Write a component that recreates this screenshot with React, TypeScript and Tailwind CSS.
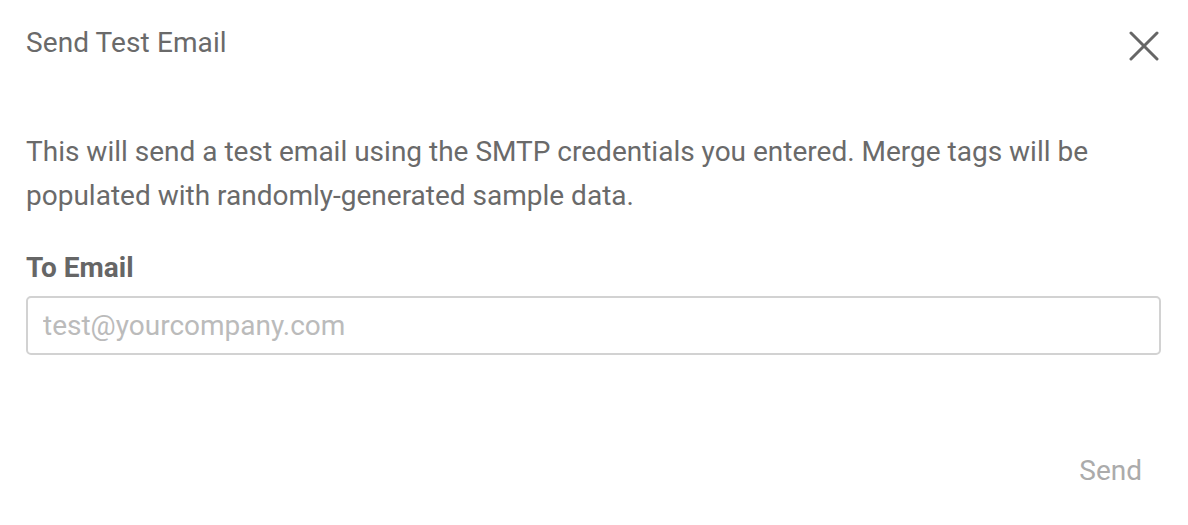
export default function App() {
  return (
    <div className="w-[1188px] h-[525px] bg-white font-['Roboto',sans-serif] text-[#6a6a6a] flex flex-col">
      {/* Header */}
      <div className="flex items-start justify-between pl-[26px] pr-[29px] pt-[25px]">
        <h1 className="text-[28px] leading-[36px] font-normal tracking-[0.1px]">Send Test Email</h1>
        <button className="mt-[6px] text-[#666666]">
          <svg width="30" height="30" viewBox="0 0 30 30" fill="none" stroke="currentColor" strokeWidth="3" strokeLinecap="round">
            <path d="M2 2 L28 28" />
            <path d="M28 2 L2 28" />
          </svg>
        </button>
      </div>

      {/* Body */}
      <div className="px-[26px] pt-[69px]">
        <p className="text-[28px] leading-[44px]">
          This will send a test email using the SMTP credentials you entered. Merge tags will be
          populated with randomly-generated sample data.
        </p>

        <label className="block mt-[34px] text-[28px] leading-[32px] font-bold text-[#666666]">To Email</label>
        <input
          type="email"
          placeholder="test@yourcompany.com"
          className="mt-[12px] w-[1135px] h-[59px] px-[15px] rounded-[5px] border-2 border-[#d2d2d2] text-[28px] placeholder:text-[#bbbbbb] outline-none"
        />
      </div>

      {/* Footer */}
      <div className="flex justify-end pr-[46px] mt-auto pb-[38px]">
        <button className="text-[28px] leading-[32px] text-[#ababab]">Send</button>
      </div>
    </div>
  );
}
